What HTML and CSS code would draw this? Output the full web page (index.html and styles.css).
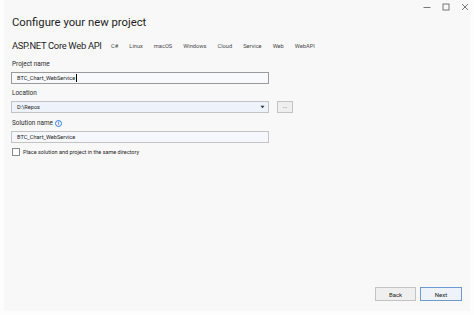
FILE: index.html
```html
<!DOCTYPE html>
<html>
<head>
<meta charset="utf-8">
<link rel="stylesheet" href="styles.css">
</head>
<body>
<div class="window">
  <div class="titlebar">
    <span class="ctl">
      <svg width="8" height="8" viewBox="0 0 8 8"><path d="M0.5 4.5h7" stroke="#555" stroke-width="0.8"/></svg>
    </span>
    <span class="ctl">
      <svg width="8" height="8" viewBox="0 0 8 8"><rect x="1" y="1" width="6" height="6" fill="none" stroke="#555" stroke-width="0.8"/></svg>
    </span>
    <span class="ctl">
      <svg width="8" height="8" viewBox="0 0 8 8"><path d="M1 1l6 6M7 1l-6 6" stroke="#555" stroke-width="0.8"/></svg>
    </span>
  </div>
  <div class="content">
    <h1 class="title">Configure your new project</h1>
    <div class="template">
      <span class="tname">ASP.NET Core Web API</span>
      <span class="tag">C#</span>
      <span class="tag">Linux</span>
      <span class="tag">macOS</span>
      <span class="tag">Windows</span>
      <span class="tag">Cloud</span>
      <span class="tag">Service</span>
      <span class="tag">Web</span>
      <span class="tag">WebAPI</span>
    </div>
    <div class="field first">
      <div class="label">Project name</div>
      <div class="input active">BTC_Chart_WebService<span class="caret"></span></div>
    </div>
    <div class="field">
      <div class="label">Location</div>
      <div class="row">
        <div class="input select">D:\Repos<svg class="arrow" width="5" height="4" viewBox="0 0 5 4"><path d="M0.5 0.8L2.5 3.2L4.5 0.8z" fill="#333"/></svg></div>
        <div class="browse">...</div>
      </div>
    </div>
    <div class="field sol">
      <div class="label">Solution name <span class="info">i</span></div>
      <div class="input">BTC_Chart_WebService</div>
    </div>
    <label class="check"><span class="box"></span>Place solution and project in the same directory</label>
    <div class="spacer"></div>
    <div class="footer">
      <div class="btn">Back</div>
      <div class="btn primary">Next</div>
    </div>
  </div>
</div>
</body>
</html>
```
FILE: styles.css
```css
html, body {
  margin: 0;
  padding: 0;
  background: #fdfdfd;
}
body {
  width: 474px;
  height: 315px;
  font-family: Roboto, "Open Sans", sans-serif;
  color: #1e1e1e;
  overflow: hidden;
}
.window {
  margin-left: 4px;
  width: 466px;
  height: 311px;
  background: #f8f8f8;
  display: flex;
  flex-direction: column;
  box-sizing: border-box;
}
.titlebar {
  height: 14px;
  display: flex;
  justify-content: flex-end;
  align-items: center;
  gap: 9px;
}
.ctl {
  width: 10px;
  height: 14px;
  display: flex;
  align-items: center;
  justify-content: center;
}
.content {
  flex: 1;
  display: flex;
  flex-direction: column;
  padding: 0 8px 10px 7px;
}
.title {
  margin: 1.5px 0 0 0;
  padding-left: 1px;
  font-size: 11.3px;
  font-weight: 400;
  line-height: 14px;
}
.template {
  display: flex;
  align-items: center;
  margin-top: 9px;
  height: 14px;
  padding-left: 1px;
}
.tname {
  font-size: 9.4px;
  letter-spacing: -0.3px;
  margin-right: 9.5px;
}
.tag {
  font-size: 5.7px;
  color: #4a4a4a;
  margin-right: 11px;
}
.field {
  display: flex;
  flex-direction: column;
  margin-top: 5px;
}
.field.first { margin-top: 7.8px; }
.field.sol { margin-top: 5.5px; }
.label {
  font-size: 6.4px;
  line-height: 9px;
  height: 9px;
  margin-bottom: 3px;
  padding-left: 1px;
  display: flex;
  align-items: center;
  gap: 2px;
  color: #2a2a2a;
}
.input {
  width: 258px;
  height: 12px;
  box-sizing: border-box;
  border: 1px solid #c3c3c3;
  background: #f4f7fc;
  font-size: 5.6px;
  line-height: 10px;
  padding-left: 5px;
  display: flex;
  align-items: center;
}
.input.active { border-color: #9a9a9a; background: #f7f9fc; }
.caret {
  display: inline-block;
  width: 0.7px;
  height: 8px;
  background: #000;
  margin-left: 0.5px;
}
.select { padding-right: 3px; background: #eef3fb; }
.arrow { margin-left: auto; }
.row {
  display: flex;
  align-items: center;
  gap: 8px;
}
.browse {
  width: 16px;
  height: 12px;
  box-sizing: border-box;
  border: 1px solid #c3c3c3;
  background: #efefef;
  font-size: 6px;
  line-height: 7px;
  text-align: center;
}
.info {
  display: inline-flex;
  width: 7px;
  height: 7px;
  border-radius: 50%;
  border: 0.8px solid #2f7fd8;
  color: #2f7fd8;
  font-size: 5px;
  align-items: center;
  justify-content: center;
  font-weight: 700;
  box-sizing: border-box;
}
.check {
  display: flex;
  align-items: center;
  margin-top: 5.5px;
  font-size: 5.5px;
  gap: 3px;
  padding-left: 1px;
}
.box {
  width: 8px;
  height: 8px;
  border: 1px solid #8a8a8a;
  box-sizing: border-box;
  background: #fff;
}
.spacer { flex: 1; }
.footer {
  display: flex;
  justify-content: flex-end;
  gap: 4px;
}
.btn {
  width: 41px;
  height: 14px;
  box-sizing: border-box;
  border: 1px solid #c3c3c3;
  background: #efefef;
  font-size: 6px;
  display: flex;
  align-items: center;
  justify-content: center;
}
.btn.primary {
  border-color: #6c9bd2;
  background: #eef3fa;
  width: 42px;
}
```
